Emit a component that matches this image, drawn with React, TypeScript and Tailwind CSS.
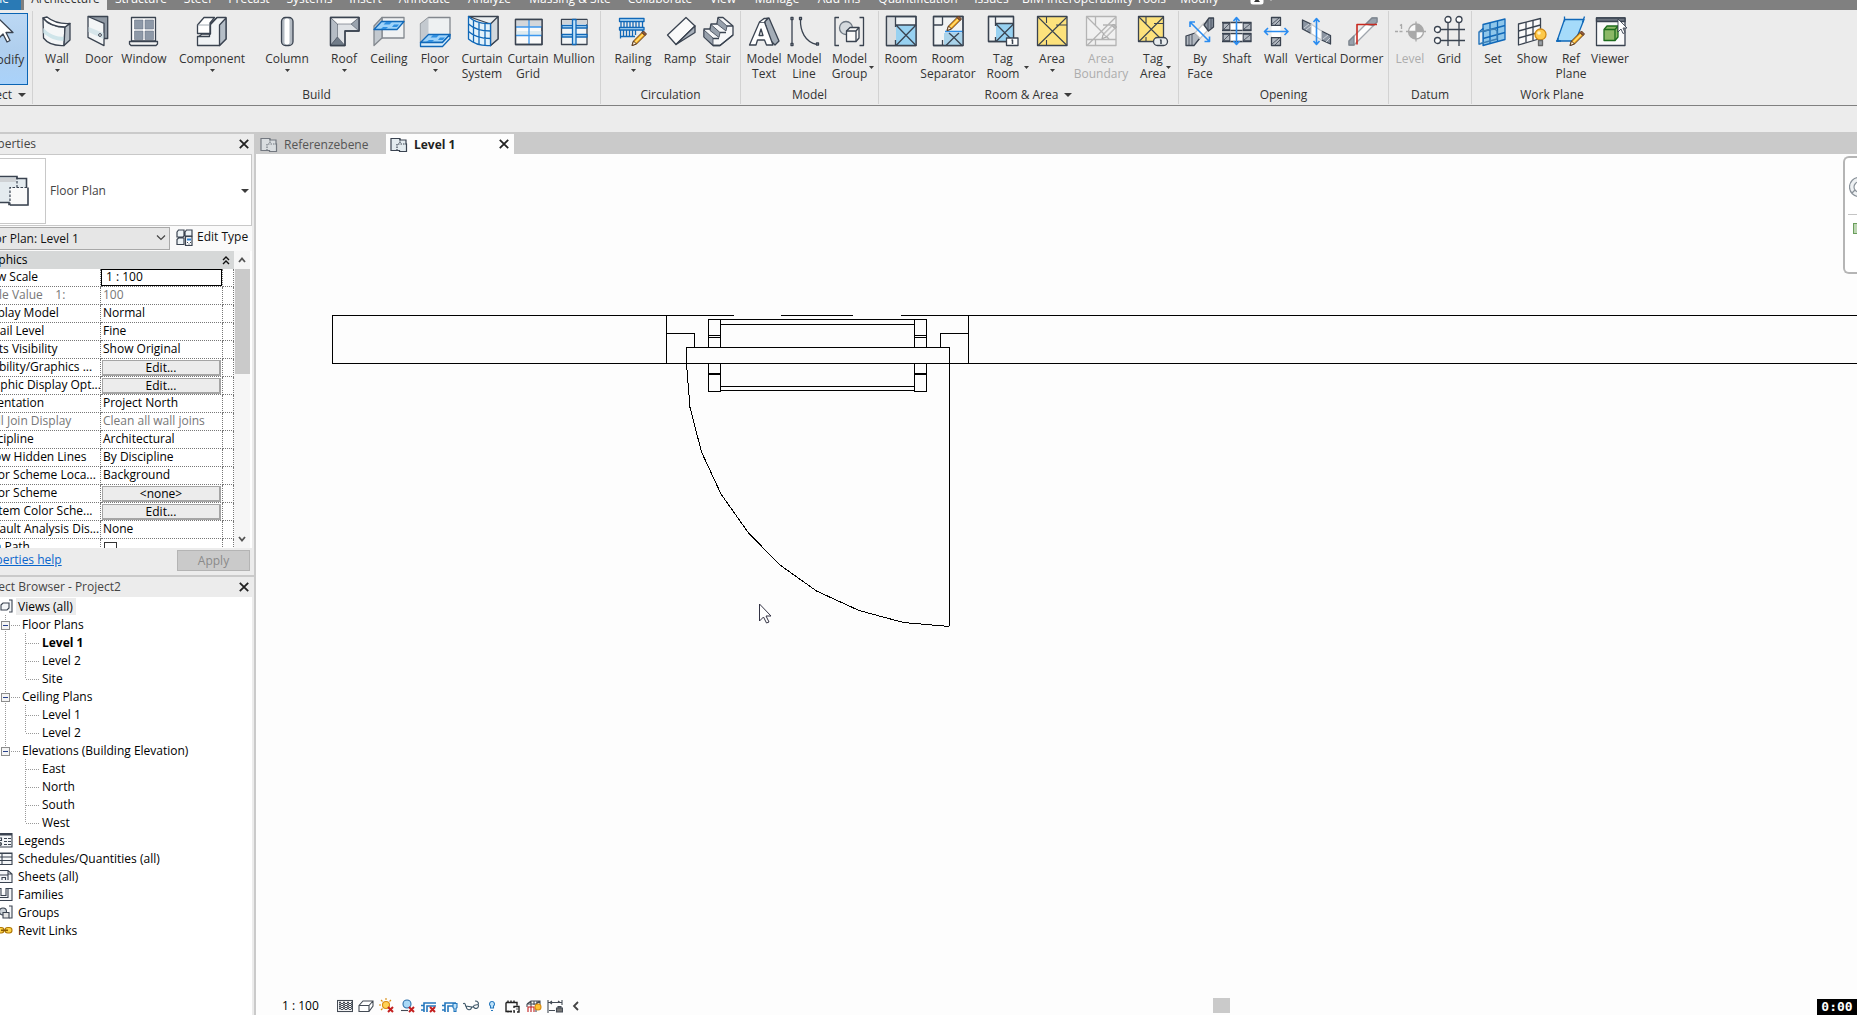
import type { ReactNode } from "react"
import clsx from "clsx"

const INK = "#3a4350"
const BLUE = "#1068b8"

type IconProps = { children: ReactNode }

function Icon({ children }: IconProps) {
  return (
    <svg viewBox="0 0 32 32" className="block h-8 w-8 shrink-0 overflow-visible" fill="none" stroke={INK} strokeWidth="1.3" strokeLinejoin="round">
      {children}
    </svg>
  )
}

function CloseIcon() {
  return (
    <svg viewBox="0 0 10 10" className="block h-2.5 w-2.5" fill="none" stroke="#222" strokeWidth="1.800">
      <path d="M.8.8l8.400 8.400M9.200.8.8 9.200" />
    </svg>
  )
}

function Pencil({ x, y, muted }: { x: number; y: number; muted?: boolean }) {
  const lead = muted ? "#a8a8a8" : "#5b3a1e"
  return (
    <g transform={`translate(${x} ${y})`} stroke={lead} strokeWidth="1">
      <path d="M0 14.500 1.500 10 10 1.500 13 4.500 4.500 13Z" fill={muted ? "#dcdcdc" : "#f9a91b"} />
      <path d="M3 11.500 11 3.500" stroke={muted ? "#f4f4f4" : "#ffe27a"} strokeWidth="1.500" />
      <path d="M10 1.500 11.500 0 14.500 3 13 4.500Z" fill={muted ? "#bcbcbc" : "#9a5a3c"} />
      <path d="M0 14.500 1.500 10 4.500 13Z" fill={muted ? "#f0f0f0" : "#fff3dc"} />
    </g>
  )
}

const icons: Record<string, ReactNode> = {
  modify: <path d="M9 4v21l5-5 4 8 3-1.500-4-8h7Z" fill="#fff" stroke={INK} />,
  wall: (
    <>
      <path d="M2 3C7 9 14 12 24 12l-1 18.500C14 31 7 29 2.500 23Z" fill="#f4f6f7" />
      <path d="M2.300 13C8 19 15 22 23.500 22v4C15 26 8 23 2.300 18Z" fill="#cfe5ea" stroke="none" />
      <path d="M24 12l5-3.500V25l-6 5.500Z" fill="#b4bcc4" />
      <path d="M2 3l4-1C12 7 20 9 29 8.500L24 12C14 12 7 9 2 3Z" fill="#fff" />
    </>
  ),
  door: (
    <>
      <path d="M5 1.500h19.700V23.500H21" fill="#8f98a3" />
      <path d="M5 1.500 21 8.300v22.300L5 22.300Z" fill="#f3f5f6" />
      <path d="M5.600 12 20.400 18v6L5.600 17Z" fill="#d6e5ea" stroke="none" />
      <circle cx="17" cy="20" r="1.400" fill="#fff" strokeWidth="1" />
    </>
  ),
  window: (
    <>
      <rect x="3.500" y="2.500" width="24" height="23.500" fill="#fff" />
      <path d="M6.500 5H15v9H6.500ZM17 5h8.500v9H17ZM6.500 16H15v8.500H6.500ZM17 16h8.500v8.500H17Z" fill="#8e99a8" stroke="#6b7686" strokeWidth="0.600" />
      <path d="M1.500 26.500h28v2.500l-1.500 1.500h-25L1.500 29Z" fill="#f4f4f4" />
    </>
  ),
  component: (
    <>
      <path d="M1.500 21.500h12V10L21 2.500h9V24l-6.500 6.500h-22Z" fill="#f0f3f5" />
      <path d="M23.500 10 30 3v21l-6.500 6.500Z" fill="#b5bec7" />
      <path d="M1.500 18.500V10L8 2.500h10.500L14 8v10.500Z" fill="#fff" />
      <path d="M1.500 10h12.500" strokeWidth="0.800" stroke="#8b949e" />
      <path d="M3 21.500 6 19h8.500V9.500L21 2.500" />
    </>
  ),
  column: (
    <>
      <rect x="10.500" y="2.500" width="11.500" height="28" rx="4" fill="#b3bac2" />
      <rect x="13.500" y="3.500" width="5" height="26" rx="2" fill="#fff" stroke="none" />
    </>
  ),
  roof: (
    <>
      <path d="M2.500 2.500H31V16H17v14.500H2.500Z" fill="#dfe2e6" />
      <path d="M2.500 2.500 9.500 9V22l-7 8.500Z" fill="#b5bcc5" strokeWidth="0.500" />
      <path d="M2.500 30.500 9.500 22l7.500 8.500Z" fill="#717c89" strokeWidth="0.500" />
      <path d="M31 2.500V16l-8-7Z" fill="#9aa3ae" strokeWidth="0.500" />
      <path d="M2.500 2.500 9.500 9H23l8-6.500Z" fill="#fafafa" strokeWidth="0.500" />
      <path d="M2.500 2.500H31V16H17v14.500H2.500Z" />
    </>
  ),
  ceiling: (
    <>
      <path d="M9 2.500h22V23H9Z" fill="#f0f2f3" stroke="#83888e" />
      <path d="M9 2.500V23l-8 7.500V11Z" fill="#c3c9cf" stroke="#83888e" />
      <path d="M8.500 6.500H31L24 14.500H1Z" fill="#9ed3fa" stroke={BLUE} />
      <path d="M13 7h6l-2.500 2.500h-6ZM21 9.500h5L24 12h-5ZM10 12h5l-2 2H8Z" fill="#2f8fe0" stroke="none" />
    </>
  ),
  floor: (
    <>
      <path d="M9.500 2.500H31V21H9.500L1.500 27V9Z" fill="#eef1f2" stroke="#83888e" />
      <path d="M9.500 2.500V21l-8 6V9Z" fill="#c3c9cf" stroke="none" />
      <path d="M9.500 19.500H31l-7.500 8h-22Z" fill="#9ed3fa" stroke={BLUE} />
      <path d="M1.500 27.500h22l7.500-8v4l-7.500 8h-22Z" fill="#d6ecfb" stroke={BLUE} />
      <path d="M14 20h6l-2.500 2.500h-6ZM21 22.500h5L24 25h-5ZM10 25h5l-2 2H7Z" fill="#2f8fe0" stroke="none" />
    </>
  ),
  curtainSystem: (
    <>
      <path d="M2.500 1.500H32V24l-7.500 6.500V9Z" fill="#eceff1" />
      <path d="M24.500 9 32 1.500V24l-7.500 6.500Z" fill="#d2d8dd" />
      <path d="M2.500 1.500C8 7 16 9 24.500 8.500v22C16 31 8 29 2.500 24Z" fill="#e3f2fb" stroke={BLUE} />
      <path d="M7.500 5.500v22M13 7.500V30M19 8.500v22M2.500 9C8 14 16 16 24.500 16M2.500 16.500C8 21.500 16 23.500 24.500 23.500" stroke={BLUE} />
    </>
  ),
  curtainGrid: (
    <>
      <rect x="3.500" y="4.500" width="26.500" height="25" fill="#fafafa" />
      <path d="M4 5h26v7H4Z" fill="#d3d6da" stroke="none" />
      <path d="M4 16h26v5H4Z" fill="#deebf0" stroke="none" />
      <path d="M17 4.500v25M3.500 12h26.500M3.500 20.500h26.500" stroke="#3b97ee" />
      <rect x="3.500" y="4.500" width="26.500" height="25" />
    </>
  ),
  mullion: (
    <>
      <rect x="3.500" y="4.500" width="25.500" height="25" fill="#f3f5f6" />
      <path d="M4 5h10v4H4ZM19 5h10v4H19Z" fill="#d0d4d8" stroke="none" />
      <path d="M4 10.500h25v2.500H4ZM4 19.500h25v2.500H4Z" fill="#bfe3fb" stroke={BLUE} />
      <path d="M14.500 4.500h3.500v25h-3.500Z" fill="#bfe3fb" stroke={BLUE} />
    </>
  ),
  railing: (
    <>
      <path d="M2.500 3.500h24.500v3H2.500ZM2.500 12.500h24.500v2.500H2.500Z" fill="#bfe3fb" stroke={BLUE} />
      <path d="M4 6.500v6M7 6.500v6M10 6.500v6M13 6.500v6M16 6.500v6M19 6.500v6M22 6.500v6M25.500 6.500v6M3.500 15v8.500M6.500 15v6M9.500 15v6M12.500 15v6M15.500 15v6M18.500 15v5M3 21.500h15M25.500 15v3" stroke={BLUE} />
      <Pencil x={15} y={16} />
    </>
  ),
  ramp: (
    <>
      <path d="M3.500 20 22 2.500 31 11 12 29.500Z" fill="#fafafa" />
      <path d="M31 11v6.500L12 29.500Z" fill="#a7afb9" />
    </>
  ),
  stair: (
    <>
      <path d="M21 2.500 31 11v9L18 30.500h-7L2 22V14h6l1-5h6l1-6.500Z" fill="#f6f7f8" />
      <path d="M16 3l9 8-1 5-9-7ZM9 9.500l9 8-1 5-9-7ZM2 15l9 8v7L2 22Z" fill="#98a1ac" strokeWidth="0.800" />
      <path d="M25 11h6M18 17.500h6M11 23.500h6M31 20 18 30.500h-7" />
    </>
  ),
  modelText: (
    <>
      <path d="M17 4l4-1 10 23-4 4-5-5-6-20Z" fill="#a4adb7" />
      <path d="M1.500 30 11.500 7h5L25 30h-6.500l-2-5H9.500l-1.500 5ZM11 20.500h4L13 14Z" fill="#fff" />
      <path d="M11.500 7 16 3.500h4L16.500 7" fill="#fff" />
    </>
  ),
  modelLine: (
    <>
      <path d="M4 4v24M12.500 4C12 16 17 27 29 29.500" />
      <path d="M3 2.500h2v2H3ZM3 28.500h2v2H3ZM11.500 2.500h2v2h-2ZM28.500 28h2v2h-2Z" fill="#fff" />
    </>
  ),
  modelGroup: (
    <>
      <path d="M5 2.500H1v28h4M25.500 2.500h4v28h-4" />
      <circle cx="12" cy="13" r="6.500" fill="#d5dade" stroke="#6c7681" />
      <path d="M12.500 16 16 12.500h9V23l-3 3.500h-9.500Z" fill="#f8f8f8" />
      <path d="M12.500 16H22v10.500M22 16l3-3.500" />
    </>
  ),
  room: (
    <>
      <rect x="1.500" y="1.500" width="29.500" height="29" fill="#f1f3f4" />
      <path d="M2 2h9v29H2Z" fill="#dadde0" stroke="none" />
      <rect x="11" y="10" width="20" height="20.500" fill="#97d1f1" stroke="none" />
      <path d="M10.500 2v10M10.500 25v5.500M10.500 10H31M11 10l20 20.500M31 10 11 30.500" />
      <rect x="1.500" y="1.500" width="29.500" height="29" />
    </>
  ),
  roomSeparator: (
    <>
      <rect x="1.500" y="1.500" width="29.500" height="29" fill="#f1f3f4" />
      <rect x="12" y="18" width="19" height="12.500" fill="#a9d3ea" stroke="none" />
      <path d="M10.500 2v8M1.500 10h9M10.500 25v5.500M14 30.500l8-8 8 8M22 22.500l-5-4.500M22 22.500l5-4.500" />
      <path d="M13 16.500h18" stroke="#2f8fe6" strokeWidth="1.600" />
      <rect x="1.500" y="1.500" width="29.500" height="29" />
      <Pencil x={15} y={1} />
    </>
  ),
  tagRoom: (
    <>
      <rect x="1.500" y="1.500" width="25" height="25" fill="#f1f3f4" />
      <rect x="9" y="9" width="17.500" height="17.500" fill="#97d1f1" stroke="none" />
      <path d="M8.500 2v9M8.500 22v4.500M8.500 8.500h18M9 9l17.500 17.500M26.500 9 9 26.500" />
      <rect x="1.500" y="1.500" width="25" height="25" />
      <rect x="19.500" y="23" width="11.500" height="7.500" fill="#fff" />
      <path d="M24.500 25.500l1-.500v4" strokeWidth="1.500" />
    </>
  ),
  area: (
    <>
      <rect x="1.500" y="1.500" width="29.500" height="29" fill="#fde27c" />
      <path d="M10.500 25v5.500M10.500 2v6M20 10h11M2 2l29 28.500M31 2 2 30.500" strokeWidth="1.100" />
    </>
  ),
  areaBoundary: (
    <>
      <rect x="1.500" y="1.500" width="29.500" height="29" fill="#f0f0f0" stroke="#b4b4b4" />
      <path d="M10.500 2v8M10.500 25v5.500M18 10h13M2 2l22 22M31 2 2 30.500M2 24.500h29" stroke="#b4b4b4" />
      <Pencil x={17} y={9} muted />
    </>
  ),
  tagArea: (
    <>
      <rect x="1.500" y="1.500" width="25" height="25" fill="#fde27c" />
      <path d="M9 2v7M9 22v4.500M17 8.500h9.500M2 2l24.500 24.500M26.500 2 2 26.500" strokeWidth="1.100" />
      <rect x="16.500" y="22.500" width="14" height="8" rx="4" fill="#e8ecee" />
      <path d="M23 25.500l1-.500v4" strokeWidth="1.500" />
    </>
  ),
  byFace: (
    <>
      <path d="M2 21l9-3 5 5-6 7.500H2Z" fill="#b3b9c1" />
      <path d="M11 18 20 8l5 6-9 9.500Z" fill="#fff" stroke="#c8c8c8" />
      <path d="M20 10l5-7h4.500v9l-5 4Z" fill="#8b95a2" />
      <path d="M5 20v10M8 19v11M24 5v10M27 3v10" stroke={INK} strokeWidth="0.800" />
      <path d="M6.500 7.500 25 26M6 12V7h5M25.500 21.500v5h-5" stroke="#2a8cf0" strokeWidth="1.600" />
    </>
  ),
  shaft: (
    <>
      <path d="M1 7.500h29.500M1 15.500h29.500M1 18.500h29.500M1 26.500h29.500" />
      <path d="M2 8h7v7H2ZM22 8h8v7h-8ZM2 19h7v7H2ZM22 19h8v7h-8Z" fill="#b1b7bf" />
      <path d="M9.500 6.500h12v21h-12Z" fill="#fff" stroke="none" />
      <path d="M9.500 7.500h12M9.500 15.500h12M9.500 18.500h12M9.500 26.500h12" />
      <path d="M3 14l5-5M3 25l5-5M23 14l6-5M23 25l6-5" strokeWidth="0.800" />
      <path d="M15.500 3v26M12.500 6l3-3.500 3 3.500M12.500 26l3 3.500 3-3.500" stroke="#2a8cf0" strokeWidth="1.600" />
    </>
  ),
  wallOpening: (
    <>
      <path d="M11.500 2.500h9v8h-9ZM11.500 22.500h9v8h-9Z" fill="#b1b7bf" />
      <path d="M11.500 11h9v11h-9Z" fill="#fff" stroke="none" />
      <path d="M12 9l7-6M15 10l5-5M12 29l7-6M15 30l5-5" strokeWidth="0.800" />
      <path d="M4.500 16.500H28M8 13l-3.500 3.500L8 20M24.500 13l3.500 3.500L24.500 20" stroke="#2a8cf0" strokeWidth="1.600" />
    </>
  ),
  vertical: (
    <>
      <path d="M2.500 5 11 9v9.500l-8.500-4.500ZM21.500 16l9 4.500V29l-9-4Z" fill="#8b95a2" />
      <path d="M11 9l10.500 7v9L11 18.500Z" fill="#fff" stroke="#c5c9cd" />
      <path d="M4 13l5-4M6 15l5-4M23 24l5-4M26 27l4-4" strokeWidth="0.800" stroke="#dfe3e7" />
      <path d="M16.500 3.500V29M13.500 7l3-3.500 3 3.500M13.500 26l3 3.500 3-3.500" stroke="#2a8cf0" strokeWidth="1.600" />
    </>
  ),
  dormer: (
    <>
      <path d="M3 26 26 3h5v4L8 30H3Z" fill="#fdfdfd" stroke="#a0a6ad" />
      <path d="M20 9l6-6h5v4l-3.500 3.500ZM3 26l5-5v9H3Z" fill="#98a1ac" stroke="#7f8790" />
      <path d="M11 29.500V9.500h20" stroke="#c8281e" strokeWidth="1.600" />
    </>
  ),
  level: (
    <>
      <path d="M1 16.500h9" stroke="#a9a9a9" strokeDasharray="3 1.500" />
      <path d="M6 10.500l1.500-1v4.500" stroke="#a9a9a9" />
      <circle cx="22" cy="16.500" r="7.500" fill="#fafafa" stroke="#a9a9a9" />
      <path d="M22 16.500V9a7.500 7.500 0 0 1 7.500 7.500ZM22 16.500V24a7.500 7.500 0 0 1-7.500-7.500Z" fill="#a9a9a9" stroke="none" />
      <path d="M12 16.500h20M22 6.500v20" stroke="#a9a9a9" />
    </>
  ),
  grid: (
    <>
      <path d="M7 14.500h25M7 25.500h25M15 7v24M26 7v24" />
      <g fill="#fff">
        <circle cx="15" cy="4.500" r="3" />
        <circle cx="26" cy="4.500" r="3" />
        <circle cx="4.500" cy="14.500" r="3" />
        <circle cx="4.500" cy="25.500" r="3" />
      </g>
    </>
  ),
  set: (
    <>
      <path d="M6 9.500 28 4v20.500L6 30.500Z" fill="#8ec6ea" stroke={BLUE} />
      <path d="M2 17l4-3.500V28l-4 1Z" fill="#e8eef2" stroke={BLUE} />
      <path d="M13 8v21M20.500 6v20.500M6 16.500l22-6M6 23.500l22-6" stroke={BLUE} />
      <path d="M2 17l9-2 7-1 2 2v8L9 27l-7 2" stroke="#3f80b5" />
    </>
  ),
  show: (
    <>
      <path d="M2.500 9 24.500 3.500v20L2.500 30Z" fill="#fafafa" />
      <path d="M10 7v20.500M17 5.500v20M2.500 16l22-6M2.500 23l22-6" />
      <circle cx="24.500" cy="19.500" r="5.500" fill="#fdc94a" stroke="#d18a14" />
      <circle cx="23" cy="18" r="1.800" fill="#fff1c4" stroke="none" />
      <path d="M22.500 25.500h4v5h-4Z" fill="#9aa0a6" stroke="#666" />
    </>
  ),
  refPlane: (
    <>
      <path d="M9.500 4.500H29L20.500 26H2Z" fill="#a5dbfa" stroke={BLUE} />
      <path d="M9.500 1.500v5M29.500 1.500l-2 6M1 26h5M3 23v4" stroke={BLUE} />
      <Pencil x={15} y={16} />
    </>
  ),
  viewer: (
    <>
      <rect x="2.500" y="3" width="28.500" height="27.500" fill="#fafafa" />
      <path d="M2.500 3h28.500v3.500H2.500Z" fill="#6d7580" />
      <path d="M10 14.500 13 11h11v11l-3 3.500H10Z" fill="#8cb866" stroke="#1c6c1c" />
      <path d="M10 14.500h11v11M21 14.500l3-3.500" stroke="#1c6c1c" />
      <path d="M24 4v13l3-3 2 4.500 2-1-2-4.500h4Z" fill="#fff" strokeWidth="0.900" />
    </>
  ),
}

const tabs = [
  ["Structure", "w-[68px]"],
  ["Steel", "w-[45px]"],
  ["Precast", "w-[58px]"],
  ["Systems", "w-[63px]"],
  ["Insert", "w-[49px]"],
  ["Annotate", "w-[69px]"],
  ["Analyze", "w-[61px]"],
  ["Massing & Site", "w-[100px]"],
  ["Collaborate", "w-[80px]"],
  ["View", "w-[46px]"],
  ["Manage", "w-[62px]"],
  ["Add-Ins", "w-[62px]"],
  ["Quantification", "w-[96px]"],
  ["Issues", "w-[51px]"],
  ["BIM Interoperability Tools", "w-[154px]"],
  ["Modify", "w-[57px]"],
]

type Tool = {
  icon: string
  lines: string[]
  width: string
  menu?: "below" | "side"
  disabled?: boolean
}

type Group = { title: string; width: string; tools: Tool[]; menu?: boolean }

const groups: Group[] = [
  {
    title: "Build",
    width: "w-[568px]",
    tools: [
      { icon: "wall", lines: ["Wall"], width: "w-12", menu: "below" },
      { icon: "door", lines: ["Door"], width: "w-9" },
      { icon: "window", lines: ["Window"], width: "w-[54px]" },
      { icon: "component", lines: ["Component"], width: "w-[82px]", menu: "below" },
      { icon: "column", lines: ["Column"], width: "w-[68px]", menu: "below" },
      { icon: "roof", lines: ["Roof"], width: "w-[46px]", menu: "below" },
      { icon: "ceiling", lines: ["Ceiling"], width: "w-11" },
      { icon: "floor", lines: ["Floor"], width: "w-12", menu: "below" },
      { icon: "curtainSystem", lines: ["Curtain", "System"], width: "w-[46px]" },
      { icon: "curtainGrid", lines: ["Curtain", "Grid"], width: "w-[46px]" },
      { icon: "mullion", lines: ["Mullion"], width: "w-[46px]" },
    ],
  },
  {
    title: "Circulation",
    width: "w-[140px]",
    tools: [
      { icon: "railing", lines: ["Railing"], width: "w-16", menu: "below" },
      { icon: "ramp", lines: ["Ramp"], width: "w-[30px]" },
      { icon: "stair", lines: ["Stair"], width: "w-[46px]" },
    ],
  },
  {
    title: "Model",
    width: "w-[138px]",
    tools: [
      { icon: "modelText", lines: ["Model", "Text"], width: "w-[46px]" },
      { icon: "modelLine", lines: ["Model", "Line"], width: "w-[34px]" },
      { icon: "modelGroup", lines: ["Model", "Group"], width: "w-[57px]", menu: "side" },
    ],
  },
  {
    title: "Room & Area",
    width: "w-[300px]",
    menu: true,
    tools: [
      { icon: "room", lines: ["Room"], width: "w-11" },
      { icon: "roomSeparator", lines: ["Room", "Separator"], width: "w-[50px]" },
      { icon: "tagRoom", lines: ["Tag", "Room"], width: "w-[60px]", menu: "side" },
      { icon: "area", lines: ["Area"], width: "w-[38px]", menu: "below" },
      { icon: "areaBoundary", lines: ["Area", "Boundary"], width: "w-[60px]", disabled: true },
      { icon: "tagArea", lines: ["Tag", "Area"], width: "w-11", menu: "side" },
    ],
  },
  {
    title: "Opening",
    width: "w-[210px]",
    tools: [
      { icon: "byFace", lines: ["By", "Face"], width: "w-[42px]" },
      { icon: "shaft", lines: ["Shaft"], width: "w-8" },
      { icon: "wallOpening", lines: ["Wall"], width: "w-[46px]" },
      { icon: "vertical", lines: ["Vertical"], width: "w-[34px]" },
      { icon: "dormer", lines: ["Dormer"], width: "w-[57px]" },
    ],
  },
  {
    title: "Datum",
    width: "w-[83px]",
    tools: [
      { icon: "level", lines: ["Level"], width: "w-[42px]", disabled: true },
      { icon: "grid", lines: ["Grid"], width: "w-9" },
    ],
  },
  {
    title: "Work Plane",
    width: "w-[160px]",
    tools: [
      { icon: "set", lines: ["Set"], width: "w-[42px]" },
      { icon: "show", lines: ["Show"], width: "w-9" },
      { icon: "refPlane", lines: ["Ref", "Plane"], width: "w-[42px]" },
      { icon: "viewer", lines: ["Viewer"], width: "w-9" },
    ],
  },
]

function Caret({ large }: { large?: boolean }) {
  return (
    <svg viewBox="0 0 8 4" className={clsx("block shrink-0 text-[#3c3c3c]", large ? "h-1 w-2" : "h-[3px] w-[5px]")} preserveAspectRatio="none" fill="currentColor">
      <path d="M0 0h8L4 4Z" />
    </svg>
  )
}

function ToolButton({ tool }: { tool: Tool }) {
  return (
    <button
      type="button"
      disabled={tool.disabled}
      className={clsx("relative flex h-full shrink-0 flex-col items-center leading-[15px] whitespace-nowrap", tool.width, tool.disabled && "text-[#adadad]")}
    >
      <Icon>{icons[tool.icon]}</Icon>
      <span className="mt-1 flex flex-col items-center">
        {tool.lines.map((line) => (
          <span key={line}>{line}</span>
        ))}
      </span>
      {tool.menu === "below" && <span className="mt-[3px]"><Caret /></span>}
      {tool.menu === "side" && <span className="absolute top-[51px] right-1"><Caret /></span>}
    </button>
  )
}

function Ribbon() {
  return (
    <header className="shrink-0">
      <nav className="flex h-6 bg-[#808080] leading-[26px] whitespace-nowrap text-white">
        <a href="#file" className="w-[45px] bg-[#2a7ab5] pr-3 text-right">File</a>
        <a href="#architecture" className="ml-[3px] w-[83px] bg-[#ececec] text-center text-[#333]">Architecture</a>
        {tabs.map(([label, width]) => (
          <a key={label} href={`#${label}`} className={clsx("flex justify-center", width)}>{label}</a>
        ))}
        <button type="button" aria-label="Minimize ribbon" className="ml-[22px] flex items-end gap-1 pb-[5px]">
          <svg viewBox="0 0 14 12" className="h-3 w-3.5"><rect x="0.500" y="0.500" width="13" height="11" rx="2.500" fill="#fff" /><path d="M4 9h6L7 5Z" fill="#333" /></svg>
          <svg viewBox="0 0 6 4" className="mb-1 h-1 w-1.5" fill="#e6e6e6"><path d="M0 0h6L3 4Z" /></svg>
        </button>
      </nav>

      <div className="flex h-24 border-b border-[#808080] bg-[#ececec] text-[#333]">
        <section className="my-px flex w-[57px] flex-col border-r border-[#d2d2d2]">
          <button type="button" className="mt-0.5 ml-1.5 flex h-[72px] w-[46px] flex-col items-center border border-[#0a64b4] bg-linear-to-b from-[#bcd8f4] via-[#b0cfee] to-[#a9d2fa] leading-[15px]">
            <Icon>{icons.modify}</Icon>
            <span className="mt-1.5">Modify</span>
          </button>
          <button type="button" className="mt-0.5 mr-1.5 flex items-center justify-end gap-1.5 leading-4">
            Select <Caret large />
          </button>
        </section>

        {groups.map((group) => (
          <section key={group.title} className={clsx("my-px flex shrink-0 flex-col border-r border-[#d2d2d2] last:border-r-0", group.width)}>
            <div className="flex h-[72px] pt-1">
              {group.tools.map((tool) => (
                <ToolButton key={tool.icon} tool={tool} />
              ))}
            </div>
            <h2 className="mt-1 flex items-center justify-center gap-1.5 leading-4">
              {group.title}
              {group.menu && <Caret large />}
            </h2>
          </section>
        ))}
      </div>
      <div className="h-[26px] bg-[#ececec]" />
    </header>
  )
}

function PlanIcon({ muted }: { muted?: boolean }) {
  return (
    <svg viewBox="0 0 18 16" className={clsx("h-4 w-[18px] shrink-0", muted && "opacity-60")} fill="#e3ebef" stroke={INK} strokeWidth="1.200">
      <path d="M1 1.500h9v1.500h6v4h.5v7.500h-7v-1H1Z" />
      <path d="M7 13.500V7h9.500M10 2v5" strokeDasharray="1.500 1" fill="none" />
    </svg>
  )
}

type Property = { label: string; value: string; kind?: "edit" | "select"; muted?: boolean }

const properties: Property[] = [
  { label: "View Scale", value: "1 : 100", kind: "select" },
  { label: "Scale Value    1:", value: "100", muted: true },
  { label: "Display Model", value: "Normal" },
  { label: "Detail Level", value: "Fine" },
  { label: "Parts Visibility", value: "Show Original" },
  { label: "Visibility/Graphics ...", value: "Edit...", kind: "edit" },
  { label: "Graphic Display Opt...", value: "Edit...", kind: "edit" },
  { label: "Orientation", value: "Project North" },
  { label: "Wall Join Display", value: "Clean all wall joins", muted: true },
  { label: "Discipline", value: "Architectural" },
  { label: "Show Hidden Lines", value: "By Discipline" },
  { label: "Color Scheme Loca...", value: "Background" },
  { label: "Color Scheme", value: "<none>", kind: "edit" },
  { label: "System Color Sche...", value: "Edit...", kind: "edit" },
  { label: "Default Analysis Dis...", value: "None" },
]

function PropertyValue({ item }: { item: Property }) {
  if (item.kind === "edit") {
    return (
      <button type="button" aria-label={item.label} className="mt-px ml-px block h-4 w-[119px] border border-r-2 border-b-2 border-[#a5a5a5] bg-[#ececec] text-center leading-[14px]">
        {item.value}
      </button>
    )
  }
  if (item.kind === "select") {
    return (
      <select aria-label={item.label} className="block h-[17px] w-[121px] appearance-none border border-black bg-white pb-0.5 pl-1 leading-[13px]">
        <option>{item.value}</option>
      </select>
    )
  }
  return <span className="pl-0.5">{item.value}</span>
}

const cell = "h-[18px] overflow-hidden border-r border-b border-dotted border-[#777] p-0 align-top leading-[15px]"

function PropertiesPanel() {
  return (
    <section className="shrink-0 bg-[#ececec]">
      <div className="flex h-5 items-center justify-between pr-[3px] pl-0.5 leading-5 text-[#444]">
        Properties
        <button type="button" aria-label="Close properties"><CloseIcon /></button>
      </div>

      <button type="button" className="flex h-[72px] w-full items-center border border-[#c8c8c8] bg-white pt-px pr-0.5 text-[#444]">
        <span className="flex h-[66px] w-[69px] items-center justify-end border border-[#c8c8c8] pr-4">
          <svg viewBox="0 0 46 32" className="h-8 w-[46px]" fill="#e4ebef" stroke={INK} strokeWidth="1.600">
            <path d="M1 1.500h33v2h9.500v26H26v-2H1Z" />
            <path d="M2 3h31v4H2Z" fill="#cfd2d5" stroke="none" />
            <path d="M27 13h18v17H27Z" fill="#fafafa" strokeWidth="0" />
            <path d="M27 30h18V12.500" fill="none" />
            <path d="M27 30V12.500h18M34 2v10" strokeDasharray="2.500 1.500" fill="none" strokeWidth="1.200" />
          </svg>
        </span>
        <span className="ml-1">Floor Plan</span>
        <span className="ml-auto"><Caret large /></span>
      </button>

      <div className="flex h-[25px] items-start bg-[#fafafa] pt-px">
        <div className="relative w-[194px]">
          <select aria-label="Type instance" className="block h-[23px] w-full appearance-none border border-[#a8a8a8] bg-[#e6e6e6] pl-px text-[#111]">
            <option>Floor Plan: Level 1</option>
          </select>
          <svg viewBox="0 0 10 6" className="pointer-events-none absolute top-2 right-1 h-1.5 w-2.5" fill="none" stroke="#444" strokeWidth="1.200"><path d="M1 .5l4 4 4-4" /></svg>
        </div>
        <button type="button" className="ml-1.5 flex items-center gap-1 leading-5 text-[#111]">
          <svg viewBox="0 0 17 17" className="h-[17px] w-[17px]" fill="#edf3f6" stroke={INK} strokeWidth="1.200">
            <path d="M1 3l1.500-2H8v6l-1 1H1ZM9 3l1.500-2H16v6H9ZM1 10.500 2.500 9H8v6.500H1Z" />
            <rect x="9.500" y="7.500" width="6.500" height="9" fill="#fff" />
            <path d="M11 9.500h4v2h-4Z" fill="#2a7fd0" stroke="none" />
            <path d="M11 13.500h1M14 13.500h1M12.500 15h1" />
          </svg>
          Edit Type
        </button>
      </div>

      <div className="flex h-[297px] overflow-hidden bg-white text-black">
        <table className="w-[258px] table-fixed border-separate border-spacing-0 self-start text-left whitespace-pre">
          <colgroup>
            <col className="w-[125px]" />
            <col className="w-[122px]" />
            <col className="w-[11px]" />
          </colgroup>
          <thead>
            <tr>
              <th colSpan={3} className="h-[18px] bg-[#d6d8d8] p-0 leading-4 font-normal">
                <span className="flex items-center justify-between pr-1 pl-0.5">
                  Graphics
                  <svg viewBox="0 0 8 9" className="h-[9px] w-2" fill="none" stroke="#111" strokeWidth="1.400"><path d="M1 4l3-3 3 3M1 8l3-3 3 3" /></svg>
                </span>
              </th>
            </tr>
          </thead>
          <tbody>
            {properties.map((item) => (
              <tr key={item.label} className={clsx(item.muted && "text-[#777]")}>
                <th scope="row" className={clsx(cell, "pl-1 font-normal")}>{item.label}</th>
                <td className={cell}><PropertyValue item={item} /></td>
                <td className={cell} />
              </tr>
            ))}
            <tr>
              <th scope="row" className={clsx(cell, "pl-1 font-normal")}><label htmlFor="sun-path">Sun Path</label></th>
              <td className={cell}>
                <input id="sun-path" type="checkbox" className="mt-[3px] ml-[3px] block h-[13px] w-[13px] appearance-none border border-[#333] bg-white" />
              </td>
              <td className={cell} />
            </tr>
          </tbody>
        </table>
        <div className="flex w-4 flex-col items-center bg-[#f6f6f6]">
          <svg viewBox="0 0 8 6" className="my-1.5 h-1.5 w-2" fill="none" stroke="#555" strokeWidth="1.800"><path d="M1 5l3-3.500L7 5" /></svg>
          <span className="h-[105px] w-[15px] bg-[#cacaca]" />
          <svg viewBox="0 0 8 6" className="mt-auto mb-1.5 h-1.5 w-2" fill="none" stroke="#555" strokeWidth="1.800"><path d="M1 1l3 3.500L7 1" /></svg>
        </div>
      </div>

      <div className="flex h-[27px] items-start justify-between pt-0.5 pr-0.5">
        <a href="#help" className="leading-5 text-[#0a66cc] underline">Properties help</a>
        <button type="button" disabled className="h-[21px] w-[73px] border border-[#b4b4b4] bg-[#cacaca] leading-[19px] text-[#8a8a8a]">Apply</button>
      </div>
    </section>
  )
}

type Node = { label: string; depth: 0 | 1 | 2; icon?: string; bold?: boolean; last?: boolean; lastBranch?: boolean }

const nodes: Node[] = [
  { label: "Views (all)", depth: 0, icon: "views" },
  { label: "Floor Plans", depth: 1 },
  { label: "Level 1", depth: 2, bold: true },
  { label: "Level 2", depth: 2 },
  { label: "Site", depth: 2, last: true },
  { label: "Ceiling Plans", depth: 1 },
  { label: "Level 1", depth: 2 },
  { label: "Level 2", depth: 2, last: true },
  { label: "Elevations (Building Elevation)", depth: 1, lastBranch: true },
  { label: "East", depth: 2, lastBranch: true },
  { label: "North", depth: 2, lastBranch: true },
  { label: "South", depth: 2, lastBranch: true },
  { label: "West", depth: 2, last: true, lastBranch: true },
  { label: "Legends", depth: 0, icon: "legends" },
  { label: "Schedules/Quantities (all)", depth: 0, icon: "schedules" },
  { label: "Sheets (all)", depth: 0, icon: "sheets" },
  { label: "Families", depth: 0, icon: "families" },
  { label: "Groups", depth: 0, icon: "groups" },
  { label: "Revit Links", depth: 0, icon: "links" },
]

const treeIcons: Record<string, ReactNode> = {
  views: <path d="M4 2H1v12h3M13 2h3v12h-3M5 7l2-2h6v5l-2 2H5Z" />,
  legends: (
    <>
      <path d="M1 1.500h15v13.500H1Z" />
      <path d="M1 2.500h15" strokeWidth="2" />
      <circle cx="4" cy="12" r="1.500" fill="#888" />
      <path d="M2.500 6h3v2.500h-3ZM8 6.500h3M12 6.500h3M8 9.500h3M12 9.500h3M8 12.500h3M12 12.500h3" />
    </>
  ),
  schedules: <path d="M1 3h15v11.500H1ZM1 3.500h15M1 7h15M1 10.500h15M6 3v11.500" />,
  sheets: <path d="M1 2.500h11L16 6v8.500H1ZM3 12V7h9v5M6 12V9.500h3.500V12M12 2.500V6h4" />,
  families: <path d="M1 2.500h4v7h5v-7h6v12H1ZM12 2.500v9H2" />,
  groups: (
    <>
      <path d="M4 2H1v12h3M13 2h3v12h-3" />
      <circle cx="7" cy="7.500" r="3.500" fill="#ccd2d8" />
      <path d="M7 8.500h6V14H7Z" fill="#e4e4e4" />
    </>
  ),
  links: (
    <g stroke="#b07908" fill="#ffd54a">
      <rect x="1" y="5.500" width="7" height="5.500" rx="2.700" />
      <rect x="9" y="5.500" width="7" height="5.500" rx="2.700" />
      <path d="M5 8.300h7" stroke="#8a5a00" strokeWidth="1.600" />
    </g>
  ),
}

function TreeGuide({ node }: { node: Node }) {
  if (node.depth === 0) {
    return (
      <svg viewBox="0 0 17 16" className="h-4 w-[17px] shrink-0" fill="#f4f6f8" stroke={INK} strokeWidth="1.100">
        {treeIcons[node.icon ?? "views"]}
      </svg>
    )
  }
  if (node.depth === 1) {
    return (
      <svg className="h-[18px] w-6 shrink-0" fill="none" stroke="#999" shapeRendering="crispEdges">
        <path d={node.lastBranch ? "M9.500 0v6" : "M9.500 0v18"} strokeDasharray="1 1" />
        <path d="M15 10.500h10" strokeDasharray="1 1" />
        <rect x="5.500" y="6.500" width="8" height="8" fill="#f4f4f4" stroke="#8c8c8c" />
        <path d="M7 10.500h5" stroke="#27408b" />
      </svg>
    )
  }
  return (
    <svg className="h-[18px] w-11 shrink-0" fill="none" stroke="#999" strokeDasharray="1 1" shapeRendering="crispEdges">
      {!node.lastBranch && <path d="M9.500 0v18" />}
      <path d={node.last ? "M29.500 0v10" : "M29.500 0v18"} />
      <path d="M29.500 10.500h14" />
    </svg>
  )
}

function ProjectBrowser() {
  return (
    <section className="flex min-h-0 flex-1 flex-col bg-white">
      <div className="flex h-5 shrink-0 items-center justify-between bg-[#ececec] pr-[3px] leading-5 text-[#444]">
        Project Browser - Project2
        <button type="button" aria-label="Close project browser"><CloseIcon /></button>
      </div>
      <ul className="pl-5 text-black">
        {nodes.map((node, i) => (
          <li key={i} className="flex h-[18px] items-center leading-[17px]">
            <TreeGuide node={node} />
            <span className={clsx("pr-[3px] pl-0.5", node.depth === 0 && "ml-[3px]", i === 0 && "bg-[#ececec]", node.bold && "font-bold")}>{node.label}</span>
          </li>
        ))}
      </ul>
    </section>
  )
}

function FloorPlan() {
  return (
    <svg aria-label="Floor plan drawing" className="block h-full w-full" fill="none" stroke="#000">
      {/* walls */}
      <g shapeRendering="crispEdges">
        <path d="M478 161.500H76.500V209.500H4000M525 161.500h72M645 161.500H4000M410.500 161v48M712.500 161v48" />
        <path d="M410.500 179.500h28v14M712.500 179.500h-28v14" />
        {/* sliding panel */}
        <path d="M452.500 193V165.500h218V193M464.500 165v28M658.500 165v28M464 170.500h194" />
        <path d="M452.500 181.500h12M452.500 183.500h12M658.500 181.500h12M658.500 183.500h12" />
        <path d="M452.500 209v28.500h12V209M670.500 209v28.500h-12V209M464 232.500h194M464 236.500h194" />
        <path d="M452.500 220h12M658.500 220h12" strokeWidth="2" />
        {/* door leaf */}
        <path d="M430.500 193.500h263v16h-263ZM693.500 209v263" />
        <path d="M430.500 209.500 434 253.500 445.500 298 465 340 492.500 379 524 411 560.500 437 603 456.500 647.500 468.500 693.500 472.500" />
      </g>
      <path d="M503.500 450v17l4-4 3 6 2.500-1-3-6h5Z" fill="#fff" stroke="#334" />
    </svg>
  )
}

const statusIcons: { label: string; art: ReactNode }[] = [
  {
    label: "Detail level",
    art: (
      <>
        <rect x="0.500" y="2.500" width="15" height="11" />
        <path d="M2 4.500h13M2 6.500h13M2 8.500h13M2 10.500h13" strokeDasharray="2 2" strokeWidth="1.400" />
        <path d="M4 5.500h11M4 7.500h11M4 9.500h11M4 11.500h11" strokeDasharray="2 2" />
      </>
    ),
  },
  { label: "Visual style", art: <path d="M1 7.500 5 3h10v5l-4 5.500H1ZM1 7.500h10v6M11 7.500 15 3" fill="#fff" /> },
  {
    label: "Sun path",
    art: (
      <>
        <circle cx="7" cy="7" r="3.500" fill="#ffd257" stroke="#d98c10" />
        <path d="M7 0v2M0 7h2M2 2l1.500 1.500M12 2l-1.500 1.500M2 12l1.500-1.500" stroke="#d98c10" />
        <path d="M9 9l5 5M14 9l-5 5" stroke="#c41f1f" strokeWidth="2" />
      </>
    ),
  },
  {
    label: "Shadows",
    art: (
      <>
        <circle cx="7" cy="6" r="4" fill="#a9d9f7" stroke="#2b6ea8" />
        <path d="M1 12.500h7" />
        <path d="M9 9l5 5M14 9l-5 5" stroke="#c41f1f" strokeWidth="2" />
      </>
    ),
  },
  {
    label: "Crop view",
    art: (
      <>
        <path d="M0 7.500h3M3 14V5h12M6 14V8h9M0 12h3" stroke="#2477bd" strokeWidth="1.600" />
        <path d="M9 9l5 5M14 9l-5 5" stroke="#c41f1f" strokeWidth="2" />
      </>
    ),
  },
  {
    label: "Show crop region",
    art: (
      <>
        <path d="M0 7.500h3M3 14V5h11M6 14V8h5M0 12h3" stroke="#2477bd" strokeWidth="1.600" />
        <path d="M11 5.500h4v4l-1 1v3h-2v-3l-1-1Z" fill="#bfe3fa" stroke="#2477bd" />
      </>
    ),
  },
  {
    label: "Temporary hide",
    art: <path d="M0 6c1-1.500 2.500-.500 2.500 1.500l1 2a2.500 2.500 0 1 0 5-.500l-5.500-1M8.500 9.500l2-1a2.500 2.500 0 1 0 4.500-2l-4.500 1M15 7c1-2 0-4-3-4" stroke="#3c5566" />,
  },
  { label: "Reveal hidden", art: <path d="M8 3.500a2.500 2.500 0 0 1 1.500 4.500v2h-3V8A2.500 2.500 0 0 1 8 3.500ZM7 12.500h2" fill="#bfe3fa" stroke="#2477bd" /> },
  { label: "View properties", art: <path d="M1 4.500h11v3M1 4.500v9h6M3 2.500v2M6 2.500v2M9 2.500v2M3 12.500v2M6 12.500v2M9 10V8.500h5V14h-2M9 12v2h1M11.500 11h1" strokeWidth="1.400" stroke="#222" /> },
  {
    label: "Analytical model",
    art: (
      <>
        <path d="M1 6l4-3h9v8M1 6h9v8M1 6v3M5 3v6M10 6l4-3M8 3v4M11 3v4" />
        <path d="M2 14V9h6v5M5 9v5" stroke="#c41f1f" />
        <circle cx="12" cy="9" r="3" fill="#ffc233" stroke="#d98c10" />
      </>
    ),
  },
  {
    label: "Constraints",
    art: (
      <>
        <path d="M1 2v13M15 2v5M1 4.500h14M3 4.500l2-1.500M3 4.500 5 6M13 4.500l-2-1.500M2 12.500h6" />
        <path d="M9.500 10h6v4h-6ZM11 10V8.500h3V10" fill="#777" />
      </>
    ),
  },
  { label: "Collapse", art: <path d="M10 4 6 8l4 4" strokeWidth="1.800" stroke="#444" /> },
]

function ViewArea() {
  return (
    <main className="relative flex min-w-0 flex-1 flex-col bg-[#fdfdfd]">
      <div className="flex h-[22px] bg-[#cacaca] pt-0.5">
        <button type="button" className="flex w-[130px] items-center gap-1.5 pt-px pl-1 leading-5 text-[#555]">
          <PlanIcon muted />
          Referenzebene
        </button>
        <div className="flex w-32 items-center bg-[#fdfdfd] pr-[5px] pl-1 text-[#222]">
          <button type="button" className="flex items-center gap-1.5 pt-px leading-5 font-bold">
            <PlanIcon />
            Level 1
          </button>
          <button type="button" aria-label="Close view" className="ml-auto"><CloseIcon /></button>
        </div>
      </div>

      <div className="min-h-0 flex-1">
        <FloorPlan />
      </div>

      {/* Navigation bar */}
      <div className="absolute top-6 right-0 flex h-[118px] w-3.5 flex-col overflow-hidden rounded-l-md border-2 border-r-0 border-[#b5b5b5] bg-white">
        <svg viewBox="0 0 12 22" className="mt-[18px] ml-1 h-[22px] w-3 shrink-0" fill="#eef1f3" stroke="#8a929a" strokeWidth="1.200">
          <circle cx="10" cy="11" r="9.500" />
          <circle cx="10" cy="11" r="5" fill="#fff" />
          <path d="M3 17l3-3" />
        </svg>
        <hr className="mt-4 ml-[3px] border-[#c4c4c4]" />
        <span className="mt-2 ml-2 h-[11px] w-4 shrink-0 border border-[#6a9e5c] bg-[#bcd6b2]" />
      </div>

      <footer className="flex h-[18px] items-center pl-[26px]">
        <span className="w-[52px] shrink-0 leading-4 text-black">1 : 100</span>
        {statusIcons.map((item) => (
          <button key={item.label} type="button" aria-label={item.label} className="flex w-[21px] shrink-0 justify-center">
            <svg viewBox="0 0 16 16" className="h-4 w-4" fill="none" stroke="#444b55" strokeWidth="1.100">{item.art}</svg>
          </button>
        ))}
        <div className="flex flex-1 justify-center pl-10">
          <span className="mb-px h-[15px] w-[17px] bg-[#cacaca]" />
        </div>
        <span className="h-4 w-10 self-end bg-black text-center font-['DejaVu_Sans_Mono',monospace] text-[13px] leading-4 font-bold text-white">0:00</span>
      </footer>
    </main>
  )
}

export default function App() {
  return (
    <div className="h-screen overflow-hidden bg-[#ececec] font-['Open_Sans','Noto_Sans',sans-serif] text-[12px]">
      <div className="-mt-3.5 -ml-6 flex h-[calc(100vh+14px)] flex-col">
        <Ribbon />
        <div className="flex min-h-0 flex-1">
          <aside className="flex w-[280px] shrink-0 flex-col border-t-2 border-r-2 border-[#cacaca] bg-[#ececec] pr-0.5">
            <PropertiesPanel />
            <div className="-mr-0.5 h-0.5 shrink-0 bg-[#cacaca]" />
            <ProjectBrowser />
          </aside>
          <ViewArea />
        </div>
      </div>
    </div>
  )
}
